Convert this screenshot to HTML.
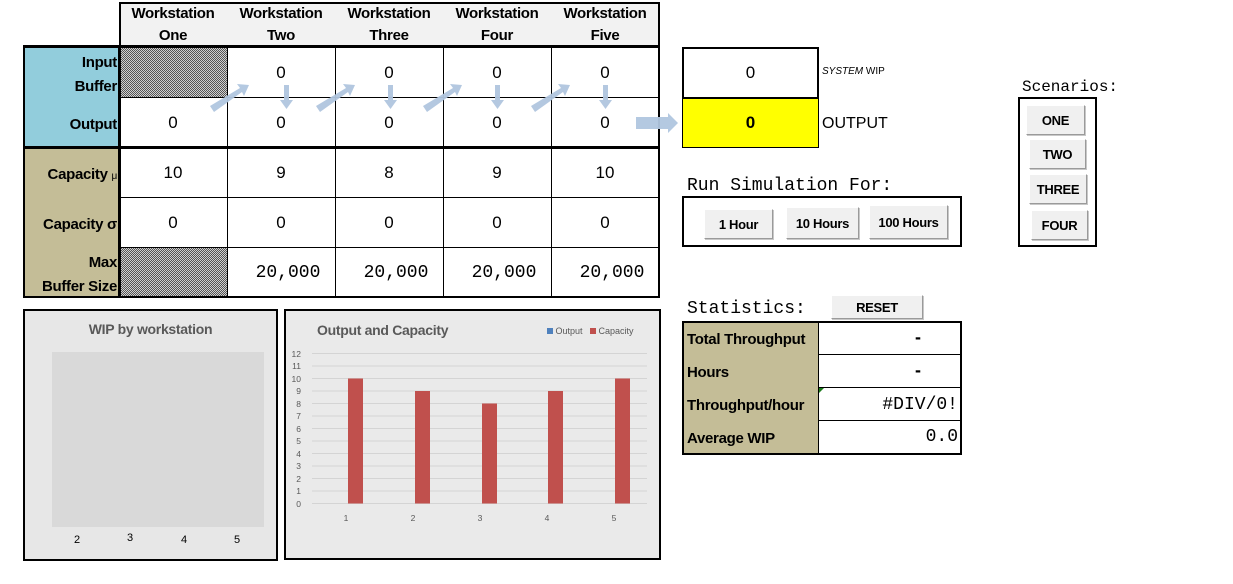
<!DOCTYPE html>
<html><head><meta charset="utf-8"><style>
*{margin:0;padding:0;box-sizing:border-box}
body{width:1233px;height:584px;background:#fff;position:relative;overflow:hidden;font-family:"Liberation Sans",sans-serif;color:#000}
.a{position:absolute}
.c{position:absolute;display:flex;align-items:center;justify-content:center;font-size:17px}
.lb{position:absolute;font-weight:bold;font-size:15px;text-align:right;letter-spacing:-0.3px;line-height:24px}
.hatch{background-color:#999;background-image:repeating-conic-gradient(#555 0 25%,#d0d0d0 0 50%);background-size:2px 2px}
.btn{position:absolute;background:#f0f0f0;border:1px solid;border-color:#fff #9a9a9a #9a9a9a #fff;box-shadow:1px 1px 0 #c8c8c8;font-weight:bold;font-size:13px;display:flex;align-items:center;justify-content:center;letter-spacing:-0.3px}
.mono{font-family:"Liberation Mono",monospace}
.hl{position:absolute;background:#000}
</style></head><body>

<div class="a" style="left:119px;top:2px;width:541px;height:45px;background:#f2f2f2;border-top:2px solid #000;border-right:2px solid #000"></div>
<div class="a" style="left:119px;top:2px;width:2px;height:45px;background:#000"></div>
<div class="lb" style="left:119px;top:3px;width:108px;text-align:center;line-height:22px">Workstation<br>One</div>
<div class="lb" style="left:227px;top:3px;width:108px;text-align:center;line-height:22px">Workstation<br>Two</div>
<div class="lb" style="left:335px;top:3px;width:108px;text-align:center;line-height:22px">Workstation<br>Three</div>
<div class="lb" style="left:443px;top:3px;width:108px;text-align:center;line-height:22px">Workstation<br>Four</div>
<div class="lb" style="left:551px;top:3px;width:108px;text-align:center;line-height:22px">Workstation<br>Five</div>

<div class="a" style="left:24px;top:46px;width:96px;height:101px;background:#92cddc"></div>
<div class="a" style="left:24px;top:147px;width:96px;height:150px;background:#c4bd97"></div>
<div class="lb" style="left:24px;top:51px;width:93px">Input<br>Buffer</div>
<div class="lb" style="left:24px;top:113px;width:93px">Output</div>
<div class="lb" style="left:24px;top:163px;width:93px">Capacity <span style="font-size:10px;font-weight:normal">μ</span></div>
<div class="lb" style="left:24px;top:213px;width:93px">Capacity σ</div>
<div class="lb" style="left:24px;top:251px;width:93px">Max<br>Buffer Size</div>

<div class="a hatch" style="left:120px;top:47px;width:107px;height:50px"></div>
<div class="a hatch" style="left:120px;top:248px;width:107px;height:49px"></div>

<div class="hl" style="left:24px;top:45px;width:636px;height:3px"></div>
<div class="hl" style="left:24px;top:146px;width:636px;height:3px"></div>
<div class="hl" style="left:24px;top:296px;width:636px;height:2px"></div>
<div class="hl" style="left:120px;top:97px;width:540px;height:1px"></div>
<div class="hl" style="left:120px;top:197px;width:540px;height:1px"></div>
<div class="hl" style="left:120px;top:247px;width:540px;height:1px"></div>
<div class="hl" style="left:23px;top:45px;width:2px;height:253px"></div>
<div class="hl" style="left:118px;top:45px;width:3px;height:253px"></div>
<div class="hl" style="left:227px;top:47px;width:1px;height:250px"></div>
<div class="hl" style="left:335px;top:47px;width:1px;height:250px"></div>
<div class="hl" style="left:443px;top:47px;width:1px;height:250px"></div>
<div class="hl" style="left:551px;top:47px;width:1px;height:250px"></div>
<div class="hl" style="left:658px;top:45px;width:2px;height:253px"></div>

<div class="c" style="left:227px;top:60px;width:108px;height:26px">0</div>
<div class="c" style="left:335px;top:60px;width:108px;height:26px">0</div>
<div class="c" style="left:443px;top:60px;width:108px;height:26px">0</div>
<div class="c" style="left:551px;top:60px;width:108px;height:26px">0</div>
<div class="c" style="left:119px;top:110px;width:108px;height:26px">0</div>
<div class="c" style="left:227px;top:110px;width:108px;height:26px">0</div>
<div class="c" style="left:335px;top:110px;width:108px;height:26px">0</div>
<div class="c" style="left:443px;top:110px;width:108px;height:26px">0</div>
<div class="c" style="left:551px;top:110px;width:108px;height:26px">0</div>
<div class="c" style="left:119px;top:160px;width:108px;height:26px">10</div>
<div class="c" style="left:227px;top:160px;width:108px;height:26px">9</div>
<div class="c" style="left:335px;top:160px;width:108px;height:26px">8</div>
<div class="c" style="left:443px;top:160px;width:108px;height:26px">9</div>
<div class="c" style="left:551px;top:160px;width:108px;height:26px">10</div>
<div class="c" style="left:119px;top:210px;width:108px;height:26px">0</div>
<div class="c" style="left:227px;top:210px;width:108px;height:26px">0</div>
<div class="c" style="left:335px;top:210px;width:108px;height:26px">0</div>
<div class="c" style="left:443px;top:210px;width:108px;height:26px">0</div>
<div class="c" style="left:551px;top:210px;width:108px;height:26px">0</div>
<div class="c mono" style="left:227px;top:260px;width:122px;height:26px;font-size:18px">20,000</div>
<div class="c mono" style="left:335px;top:260px;width:122px;height:26px;font-size:18px">20,000</div>
<div class="c mono" style="left:443px;top:260px;width:122px;height:26px;font-size:18px">20,000</div>
<div class="c mono" style="left:551px;top:260px;width:122px;height:26px;font-size:18px">20,000</div>

<svg class="a" style="left:0;top:0" width="700" height="150">
<g fill="#b0c6df" opacity="0.95">
<g id="d"><polygon points="210,106 240,88 237,84 249,85 244,96 242,92 214,112"/></g>
<use href="#d" x="106"/><use href="#d" x="213"/><use href="#d" x="321"/>
<g id="v"><polygon points="284,85 289,85 289,100 293,100 286.5,109 280,100 284,100"/></g>
<use href="#v" x="104"/><use href="#v" x="211"/><use href="#v" x="319"/>
<polygon points="636,117 668,117 668,113 678,123 668,133 668,129 636,129"/>
</g></svg>

<div class="a" style="left:682px;top:47px;width:137px;height:101px;border:2px solid #000"></div>
<div class="a" style="left:683px;top:97px;width:135px;height:50px;background:#ff0;border-top:2px solid #000"></div>
<div class="c" style="left:682px;top:60px;width:137px;height:26px">0</div>
<div class="c" style="left:682px;top:110px;width:137px;height:26px;font-weight:bold">0</div>
<div class="a" style="left:822px;top:66px;font-size:10px;font-style:italic">SYSTEM <span style="font-style:normal">WIP</span></div>
<div class="a" style="left:822px;top:115px;font-size:16px">OUTPUT</div>

<div class="a mono" style="left:687px;top:176px;font-size:18px">Run Simulation For:</div>
<div class="a" style="left:682px;top:196px;width:280px;height:51px;border:2px solid #000"></div>
<div class="btn" style="left:704px;top:209px;width:69px;height:30px">1 Hour</div>
<div class="btn" style="left:786px;top:207px;width:73px;height:32px">10 Hours</div>
<div class="btn" style="left:869px;top:205px;width:79px;height:34px">100 Hours</div>

<div class="a mono" style="left:1022px;top:78px;font-size:16px">Scenarios:</div>
<div class="a" style="left:1018px;top:97px;width:79px;height:150px;border:2px solid #000"></div>
<div class="btn" style="left:1026px;top:105px;width:59px;height:30px">ONE</div>
<div class="btn" style="left:1029px;top:139px;width:57px;height:30px">TWO</div>
<div class="btn" style="left:1029px;top:174px;width:58px;height:30px">THREE</div>
<div class="btn" style="left:1031px;top:210px;width:57px;height:30px">FOUR</div>

<div class="a mono" style="left:687px;top:299px;font-size:18px">Statistics:</div>
<div class="btn" style="left:831px;top:295px;width:92px;height:24px">RESET</div>
<div class="a" style="left:682px;top:321px;width:280px;height:134px;border:2px solid #000;background:#fff"></div>
<div class="a" style="left:684px;top:323px;width:134px;height:130px;background:#c4bd97"></div>
<div class="hl" style="left:818px;top:323px;width:1px;height:130px"></div>
<div class="hl" style="left:819px;top:354px;width:141px;height:1px"></div>
<div class="hl" style="left:819px;top:387px;width:141px;height:1px"></div>
<div class="hl" style="left:819px;top:420px;width:141px;height:1px"></div>
<div class="a" style="left:819px;top:388px;width:0;height:0;border-top:5px solid #1a7a1a;border-right:5px solid transparent"></div>
<div class="lb" style="left:687px;top:328px;text-align:left">Total Throughput</div>
<div class="lb" style="left:687px;top:361px;text-align:left">Hours</div>
<div class="lb" style="left:687px;top:394px;text-align:left">Throughput/hour</div>
<div class="lb" style="left:687px;top:427px;text-align:left">Average WIP</div>
<div class="a" style="left:915px;top:327px;font-size:18px;font-weight:bold">-</div>
<div class="a" style="left:915px;top:360px;font-size:18px;font-weight:bold">-</div>
<div class="a mono" style="left:820px;top:395px;width:138px;text-align:right;font-size:18px">#DIV/0!</div>
<div class="a mono" style="left:820px;top:427px;width:138px;text-align:right;font-size:18px">0.0</div>

<div class="a" style="left:23px;top:309px;width:255px;height:252px;background:#e7e7e7;border:2px solid #000"></div>
<div class="a" style="left:52px;top:352px;width:212px;height:175px;background:#d9d9d9"></div>
<div class="a" style="left:23px;top:321px;width:255px;text-align:center;font-weight:bold;font-size:14px;color:#595959;letter-spacing:-0.3px">WIP by workstation</div>
<div class="a" style="left:74px;top:534px;font-size:11px">2</div>
<div class="a" style="left:127px;top:532px;font-size:11px">3</div>
<div class="a" style="left:181px;top:534px;font-size:11px">4</div>
<div class="a" style="left:234px;top:534px;font-size:11px">5</div>

<div class="a" style="left:284px;top:309px;width:377px;height:251px;background:#eaeaea;border:2px solid #000"></div>
<div class="a" style="left:317px;top:322px;font-weight:bold;font-size:14px;color:#595959;letter-spacing:-0.3px">Output and Capacity</div>
<div class="a" style="left:547px;top:326px;font-size:9px;color:#595959"><span style="display:inline-block;width:6px;height:6px;background:#4f81bd"></span> Output &nbsp;&nbsp;<span style="display:inline-block;width:6px;height:6px;background:#c0504d"></span> Capacity</div>
<svg class="a" style="left:284px;top:309px" width="377" height="251">
<g stroke="#d4d4d4" stroke-width="1">
<line x1="28" x2="363" y1="44.5" y2="44.5"/><line x1="28" x2="363" y1="57" y2="57"/><line x1="28" x2="363" y1="69.5" y2="69.5"/><line x1="28" x2="363" y1="82" y2="82"/><line x1="28" x2="363" y1="94.5" y2="94.5"/><line x1="28" x2="363" y1="107" y2="107"/><line x1="28" x2="363" y1="119.5" y2="119.5"/><line x1="28" x2="363" y1="132" y2="132"/><line x1="28" x2="363" y1="144.5" y2="144.5"/><line x1="28" x2="363" y1="157" y2="157"/><line x1="28" x2="363" y1="169.5" y2="169.5"/><line x1="28" x2="363" y1="182" y2="182"/><line x1="28" x2="363" y1="194.5" y2="194.5"/>
</g>
<g fill="#c0504d">
<rect x="64" y="69.5" width="15" height="125"/><rect x="131" y="82" width="15" height="112.5"/><rect x="198" y="94.5" width="15" height="100"/><rect x="264" y="82" width="15" height="112.5"/><rect x="331" y="69.5" width="15" height="125"/>
</g>
<g font-family="Liberation Sans" font-size="8.5" fill="#595959" text-anchor="end">
<text x="17" y="48">12</text><text x="17" y="60">11</text><text x="17" y="73">10</text><text x="17" y="85">9</text><text x="17" y="98">8</text><text x="17" y="110">7</text><text x="17" y="123">6</text><text x="17" y="135">5</text><text x="17" y="148">4</text><text x="17" y="160">3</text><text x="17" y="173">2</text><text x="17" y="185">1</text><text x="17" y="198">0</text>
</g>
<g font-family="Liberation Sans" font-size="8.5" fill="#595959" text-anchor="middle">
<text x="62" y="212">1</text><text x="129" y="212">2</text><text x="196" y="212">3</text><text x="263" y="212">4</text><text x="330" y="212">5</text>
</g>
</svg>
</body></html>
